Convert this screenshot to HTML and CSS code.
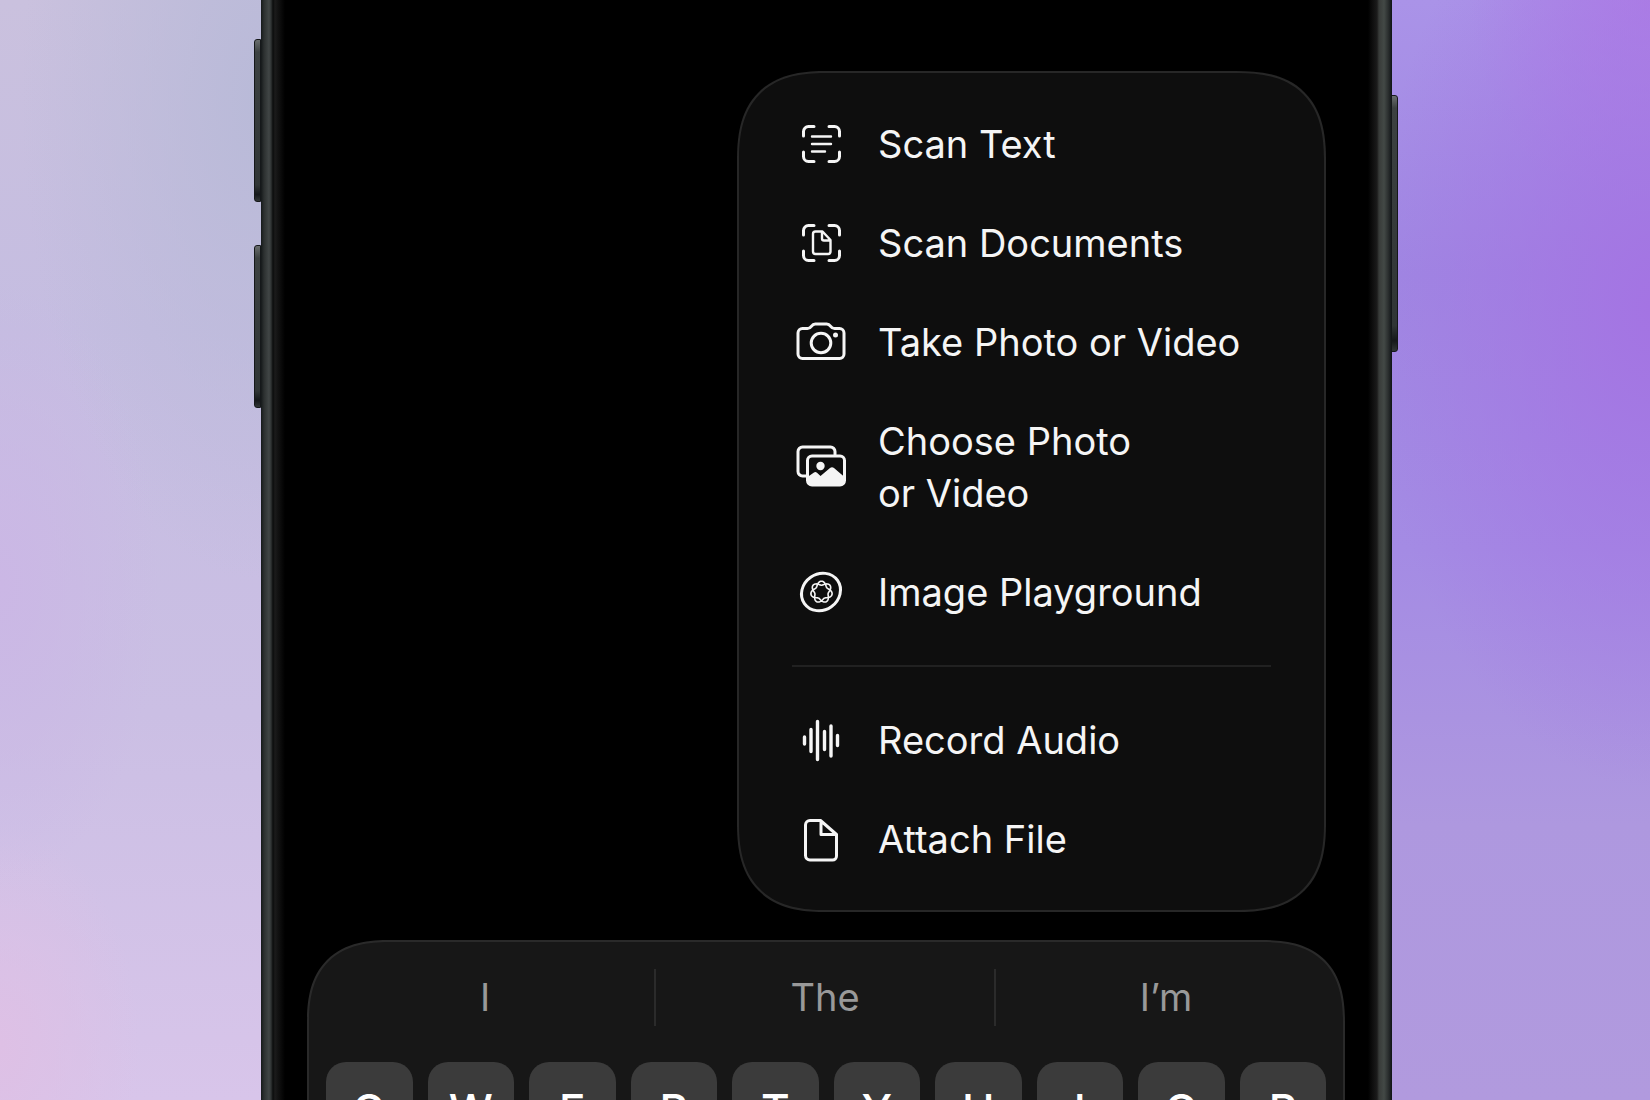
FILE: index.html
```html
<!DOCTYPE html>
<html lang="en">

<head>
    <meta charset="UTF-8">
    <meta name="viewport" content="width=device-width, initial-scale=1.0">
    <title>Attachment Menu</title>
    <link rel="stylesheet" href="styles.css">
</head>

<body>
    <div class="phone">
        <span class="side-button volume-up"></span>
        <span class="side-button volume-down"></span>
        <span class="side-button power"></span>

        <main class="screen">
            <div class="menu">
                <button type="button" class="menu-item">
                    <svg class="icon" viewBox="0 0 58 52">
                        <path class="thick" d="M11.500 18v-4.500a5 5 0 0 1 5-5h5.500M37 8.500h5.500a5 5 0 0 1 5 5v4.500M47.500 34v4.500a5 5 0 0 1-5 5h-5.500M22 43.500h-5.500a5 5 0 0 1-5-5v-4.500" />
                        <path d="M20 18.500h19M20 26h19M20 33.500h13" />
                    </svg>
                    <span>Scan Text</span>
                </button>
                <button type="button" class="menu-item">
                    <svg class="icon" viewBox="0 0 58 52">
                        <path class="thick" d="M11.500 18v-4.500a5 5 0 0 1 5-5h5.500M37 8.500h5.500a5 5 0 0 1 5 5v4.500M47.500 34v4.500a5 5 0 0 1-5 5h-5.500M22 43.500h-5.500a5 5 0 0 1-5-5v-4.500" />
                        <path d="M23.500 14.500h7l8 8.500v11.500a2.500 2.500 0 0 1-2.500 2.500h-12.500a2.500 2.500 0 0 1-2.500-2.500v-17.500a2.500 2.500 0 0 1 2.500-2.500zM30 15v6.500a2 2 0 0 0 2 2h6.500" />
                    </svg>
                    <span>Scan Documents</span>
                </button>
                <button type="button" class="menu-item">
                    <svg class="icon" viewBox="0 0 58 52">
                        <path class="thick" d="M10.500 12.500h5c2 0 2.800-.8 3.800-2.200 1.200-1.600 2-2.300 4-2.300h11.400c2 0 2.800.7 4 2.300 1 1.400 1.800 2.200 3.800 2.200h5a4.500 4.500 0 0 1 4.500 4.500v21a4.500 4.500 0 0 1-4.500 4.500h-37a4.500 4.500 0 0 1-4.500-4.500v-21a4.500 4.500 0 0 1 4.500-4.500z" />
                        <circle class="thick" cx="29" cy="27" r="9.800" />
                        <circle class="solid" cx="43.500" cy="19" r="2.500" />
                    </svg>
                    <span>Take Photo or Video</span>
                </button>
                <button type="button" class="menu-item">
                    <svg class="icon" viewBox="0 0 58 52">
                        <path class="thick" d="M14 35h-3.500a4.500 4.500 0 0 1-4.500-4.500v-20a4.500 4.500 0 0 1 4.500-4.500h28a4.500 4.500 0 0 1 4.500 4.500v3" />
                        <rect class="thick" x="15.500" y="15" width="37" height="29" rx="4.500" />
                        <circle class="solid" cx="28.500" cy="25" r="4.200" />
                        <path class="solid" d="M15.500 36l6.500-4.500q1.500-1 3 .2l3.500 3.300 9.500-8q2-1.600 4 0l10.500 9v4a4 4 0 0 1-4 4h-29a4 4 0 0 1-4-4z" />
                    </svg>
                    <span>Choose Photo<br>or Video</span>
                </button>
                <button type="button" class="menu-item">
                    <svg class="icon" viewBox="0 0 58 52">
                        <ellipse class="thick" cx="29" cy="26" rx="20.200" ry="18" transform="rotate(-35 29 26)" />
                        <path class="thin" id="petals" />
                    </svg>
                    <span>Image Playground</span>
                </button>
                <hr>
                <button type="button" class="menu-item">
                    <svg class="icon" viewBox="0 0 58 52">
                        <path class="bars" d="M12.500 23v7M19 15.500v22M25.500 7.500v38M32.500 17.500v18M39 12v30M45.500 21.500v10" />
                    </svg>
                    <span>Record Audio</span>
                </button>
                <button type="button" class="menu-item">
                    <svg class="icon" viewBox="0 0 58 52">
                        <path class="thick" d="M18 7.500h10.500l16 14v21.500a4 4 0 0 1-4 4h-22.500a4.500 4.500 0 0 1-4.500-4.500v-30.500a4.500 4.500 0 0 1 4.500-4.500zM29 8v13.500h15" />
                    </svg>
                    <span>Attach File</span>
                </button>
            </div>

            <div class="keyboard">
                <div class="suggestions">
                    <button type="button">I</button>
                    <button type="button">The</button>
                    <button type="button">I’m</button>
                </div>
                <div class="keys">
                    <button type="button">Q</button>
                    <button type="button">W</button>
                    <button type="button">E</button>
                    <button type="button">R</button>
                    <button type="button">T</button>
                    <button type="button">Y</button>
                    <button type="button">U</button>
                    <button type="button">I</button>
                    <button type="button">O</button>
                    <button type="button">P</button>
                </div>
            </div>
        </main>
    </div>

    <script>
        // seven-petal knot inside the Image Playground icon, one line going round twice
        let d = '';

        for (let i = 0; i < 280; i++) {
            const a = i / 280 * Math.PI * 4;
            const r = 8.8 + 2 * Math.cos(3.5 * a);
            const x = 29.5 + r * Math.sin(a);
            const y = 26 - r * Math.cos(a);
            d += (i ? 'L' : 'M') + x.toFixed(2) + ' ' + y.toFixed(2);
        }

        document.getElementById('petals').setAttribute('d', d + 'z');
    </script>
</body>

</html>
```

FILE: styles.css
```css
* {
    box-sizing: border-box;
}

body {
    margin: 0;
    height: 100vh;
    overflow: hidden;
    display: grid;
    grid-template-columns: 261fr 1131fr 258fr;
    font-family: Inter, "Liberation Sans", sans-serif;
    background:
        radial-gradient(ellipse 280px 480px at 100% 28%, #a474e3 0%, rgba(164, 116, 227, 0) 100%),
        radial-gradient(ellipse 180px 220px at 100% 0%, #ae80e6 0%, rgba(174, 128, 230, 0) 100%),
        radial-gradient(ellipse 240px 480px at 261px 100px, #b9bad8 0%, rgba(185, 186, 216, 0) 100%),
        radial-gradient(ellipse 160px 300px at 0% 53%, #cbb7e5 0%, rgba(203, 183, 229, 0) 100%),
        radial-gradient(ellipse 140px 220px at 0% 95%, #dec0e5 0%, rgba(222, 192, 229, 0) 100%),
        linear-gradient(#cac1de, #c5bde1 30%, #cbbfe4 65%, #d8c5ea) left / 50% 100% no-repeat,
        linear-gradient(#aa93e8, #9f86e2 25%, #a48be4 50%, #ae98df 75%, #b19ade) right / 50% 100% no-repeat;
}

button {
    margin: 0;
    padding: 0;
    border: 0;
    background: none;
    color: inherit;
    font: inherit;
    cursor: pointer;
}

.phone {
    grid-column: 2;
    position: relative;
    height: 100vh;
    padding: 0 19px;
    background: linear-gradient(to right,
        #15191a 0, #2c3030 3px, #414646 8px, #303434 10px, #0b0c0c 12px, #1b1b1b 14px, #121212 17px, #000 24px,
        #000 calc(100% - 24px), #121212 calc(100% - 18px), #1b1b1b calc(100% - 15px), #383b39 calc(100% - 13px), #434946 calc(100% - 8px), #2c3030 calc(100% - 4px), #101416 100%);
}

.side-button {
    position: absolute;
    width: 7px;
    border: 1px solid #15181a;
    background: linear-gradient(#6a6e6e, #3c4141 12px, #303535 90%, #15181a 96%, #303535);
}

.volume-up,
.volume-down {
    left: -7px;
    height: 163px;
    border-radius: 3px 0 0 3px;
}

.volume-up {
    top: 39px;
}

.volume-down {
    top: 245px;
}

.power {
    right: -6px;
    top: 95px;
    height: 257px;
    border-radius: 0 3px 3px 0;
}

.screen {
    height: 100%;
    padding: 71px 28px 0 27px;
    display: flex;
    flex-direction: column;
    gap: 28px;
}

.menu {
    align-self: flex-end;
    width: 589px;
    max-width: 100%;
    margin-right: 19px;
    padding: 45px 53px;
    border: 2px solid #272727;
    border-radius: 76px;
    background: #0e0e0e;
    color: #f5f5f5;
    display: flex;
    flex-direction: column;
    gap: 47px;
    font-size: 38px;
    line-height: 52px;
}

.menu-item {
    display: flex;
    align-items: center;
    gap: 28px;
    text-align: left;
    white-space: nowrap;
}

.menu hr {
    width: 100%;
    margin: 0;
    border: 0;
    border-top: 2px solid #212121;
}

.icon {
    flex: none;
    width: 58px;
    height: 52px;
    fill: none;
    stroke: #f5f5f5;
    stroke-width: 2.4;
    stroke-linecap: round;
    stroke-linejoin: round;
}

.icon .thick {
    stroke-width: 3;
}

.icon .thin {
    stroke-width: 1.6;
}

.icon .bars {
    stroke-width: 3.4;
}

.icon .solid {
    fill: #f5f5f5;
    stroke: none;
}

.keyboard {
    flex: none;
    border: 2px solid #2a2a2a;
    border-radius: 70px 70px 0 0;
    background: #171717;
    padding: 27px 17px 0;
}

.suggestions {
    display: grid;
    grid-template-columns: repeat(3, 1fr);
    margin: 0 -10px;
    color: #999;
    font-size: 38px;
    line-height: 57px;
}

.suggestions button:not(:last-child) {
    border-right: 2px solid #2b2b2b;
}

.keys {
    display: flex;
    gap: 15px;
    margin-top: 36px;
}

.keys button {
    flex: 1;
    height: 96px;
    border-radius: 20px;
    background: #3b3b3b;
    color: #fff;
    font-size: 44px;
    font-weight: 500;
}

/* smoother corners where the browser has them */
@supports (corner-shape: squircle) {
    .menu {
        border-radius: 90px;
        corner-shape: superellipse(1.35);
    }

    .keyboard {
        border-radius: 84px 84px 0 0;
        corner-shape: superellipse(1.35);
    }
}
```
